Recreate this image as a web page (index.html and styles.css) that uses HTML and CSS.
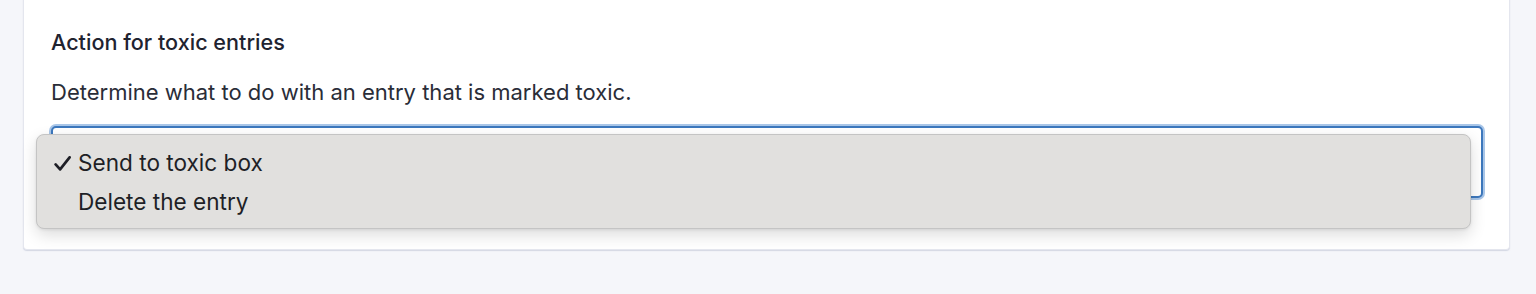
FILE: index.html
```html
<!DOCTYPE html>
<html lang="en">
<head>
<meta charset="utf-8">
<title>Action for toxic entries</title>
<link rel="stylesheet" href="styles.css">
</head>
<body>
<div class="page">
  <section class="card">
    <h3 class="field-title">Action for toxic entries</h3>
    <p class="field-desc">Determine what to do with an entry that is marked toxic.</p>
    <div class="select-wrap">
      <div class="select" tabindex="0"></div>
      <ul class="menu">
        <li class="menu-item checked"><span class="check"><svg width="17" height="15" viewBox="0 0 17 15" aria-hidden="true"><path d="M1.6 8.4 L6.1 13.4 L15.6 1.4" fill="none" stroke="#1e1f26" stroke-width="2.7" stroke-linecap="round" stroke-linejoin="round"/></svg></span>Send to toxic box</li>
        <li class="menu-item"><span class="check"></span>Delete the entry</li>
      </ul>
    </div>
  </section>
</div>
</body>
</html>
```
FILE: styles.css
```css
* { box-sizing: border-box; }
html, body { margin: 0; padding: 0; }
body {
  background: #f5f6fa;
  font-family: Inter, "Noto Sans", "Liberation Sans", sans-serif;
  color: #1f2330;
  width: 1536px;
  height: 294px;
  overflow: hidden;
}
.page {
  padding: 0 26px 0 23px;
}
.card {
  background: #ffffff;
  border: 1px solid #e4e6ee;
  border-top: none;
  border-radius: 0 0 4px 4px;
  box-shadow: 0 1px 1px rgba(180, 185, 205, 0.5);
  padding: 30px 26px 0 27px;
  margin-top: -1px;
  height: 251px;
}
.field-title {
  margin: 0;
  font-size: 21.6px;
  font-weight: 500;
  line-height: 26px;
  letter-spacing: 0;
}
.field-desc {
  margin: 24px 0 0;
  font-size: 22px;
  font-weight: 400;
  line-height: 26px;
  color: #2a2d38;
}
.select-wrap {
  position: relative;
  margin-top: 21px;
}
.select {
  height: 72px;
  border: 2px solid #3d78bd;
  border-radius: 5px;
  box-shadow: 0 0 0 2px #a9c6e8;
  background: #fff;
  margin-left: 0;
}
.menu {
  position: absolute;
  left: -15px;
  top: 8px;
  width: 1435px;
  height: 95px;
  margin: 0;
  padding: 8px 0 0;
  list-style: none;
  background: #e1e0de;
  border: 1px solid #c4c4c4;
  border-radius: 8px;
  box-shadow: 0 6px 16px rgba(0, 0, 0, 0.14), 0 1px 3px rgba(0, 0, 0, 0.08);
}
.menu-item {
  display: flex;
  align-items: center;
  height: 39px;
  padding-left: 17px;
  font-size: 22.6px;
  line-height: 28px;
  color: #1e1f26;
}
.check {
  display: inline-flex;
  align-items: center;
  width: 24px;
  height: 15px;
  margin-top: 1px;
}
.check svg { display: block; }
```
